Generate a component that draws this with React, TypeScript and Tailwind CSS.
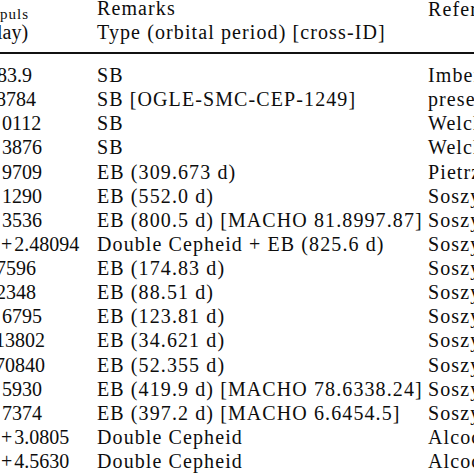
import React from 'react';

// Binary Cepheid table, cropped on both sides like the source figure
const rows = [
  { p: '83.9', o: '-ml-[3px]', r: 'SB', ref: 'Imbert (1994)' },
  { p: '8784', o: '-ml-[4px]', r: 'SB [OGLE-SMC-CEP-1249]', ref: 'present work' },
  { p: '0112', o: 'ml-[2px]', r: 'SB', ref: 'Welch et al. (1987)' },
  { p: '3876', o: 'ml-[2px]', r: 'SB', ref: 'Welch et al. (1987)' },
  { p: '9709', o: 'ml-[2px]', r: 'EB (309.673 d)', ref: 'Pietrzyński et al. (2010)' },
  { p: '1290', o: 'ml-[2px]', r: 'EB (552.0 d)', ref: 'Soszyński et al. (2010)' },
  { p: '3536', o: 'ml-[2px]', r: 'EB (800.5 d) [MACHO 81.8997.87]', ref: 'Soszyński et al. (2010)' },
  { p: '2.48094', plus: true, o: '-ml-[1px]', r: 'Double Cepheid + EB (825.6 d)', ref: 'Soszyński et al. (2010)' },
  { p: '7596', o: '-ml-[4px]', r: 'EB (174.83 d)', ref: 'Soszyński et al. (2010)' },
  { p: '2348', o: '-ml-[4px]', r: 'EB (88.51 d)', ref: 'Soszyński et al. (2010)' },
  { p: '6795', o: 'ml-[2px]', r: 'EB (123.81 d)', ref: 'Soszyński et al. (2010)' },
  { p: '13802', o: '-ml-[5px]', r: 'EB (34.621 d)', ref: 'Soszyński et al. (2010)' },
  { p: '70840', o: '-ml-[5px]', r: 'EB (52.355 d)', ref: 'Soszyński et al. (2010)' },
  { p: '5930', o: 'ml-[2px]', r: 'EB (419.9 d) [MACHO 78.6338.24]', ref: 'Soszyński et al. (2010)' },
  { p: '7374', o: 'ml-[2px]', r: 'EB (397.2 d) [MACHO 6.6454.5]', ref: 'Soszyński et al. (2010)' },
  { p: '3.0805', plus: true, o: '-ml-[1px]', r: 'Double Cepheid', ref: 'Alcock et al. (1995)' },
  { p: '4.5630', plus: true, o: '-ml-[1px]', r: 'Double Cepheid', ref: 'Alcock et al. (1995)' },
];

export default function App() {
  return (
    <div className="w-[474px] h-[474px] overflow-hidden bg-white text-[#0d0d0d] font-['Liberation_Serif',serif] text-[20px] leading-[24px] whitespace-nowrap">
      <div className="-mt-[4px]">
        {/* header */}
        <div className="flex h-[24px]">
          <div className="w-[97px] shrink-0">
            <sub className="text-[15px] tracking-[1px]">puls</sub>
          </div>
          <div className="w-[331px] shrink-0 tracking-[1.1px]">Remarks</div>
          <div className="tracking-[1.1px] pt-[1px]">Reference</div>
        </div>
        <div className="flex h-[24px]">
          <div className="w-[97px] shrink-0">
            <div className="-ml-[3px]">lay)</div>
          </div>
          <div className="w-[331px] shrink-0 tracking-[1.1px]">Type (orbital period) [cross-ID]</div>
          <div />
        </div>
        <div className="mt-[8px] h-[2px] bg-[#111]" />

        <div className="mt-[9px]">
          {rows.map((row, i) => (
            <div key={i} className="flex h-[24.125px]">
              <div className="w-[97px] shrink-0">
                <div className={row.o}>
                  {row.plus && <span className="px-[2px]">+</span>}
                  {row.p}
                </div>
              </div>
              <div className="w-[331px] shrink-0 tracking-[1.1px]">{row.r}</div>
              <div className="tracking-[1.1px]">{row.ref}</div>
            </div>
          ))}
        </div>
      </div>
    </div>
  );
}
